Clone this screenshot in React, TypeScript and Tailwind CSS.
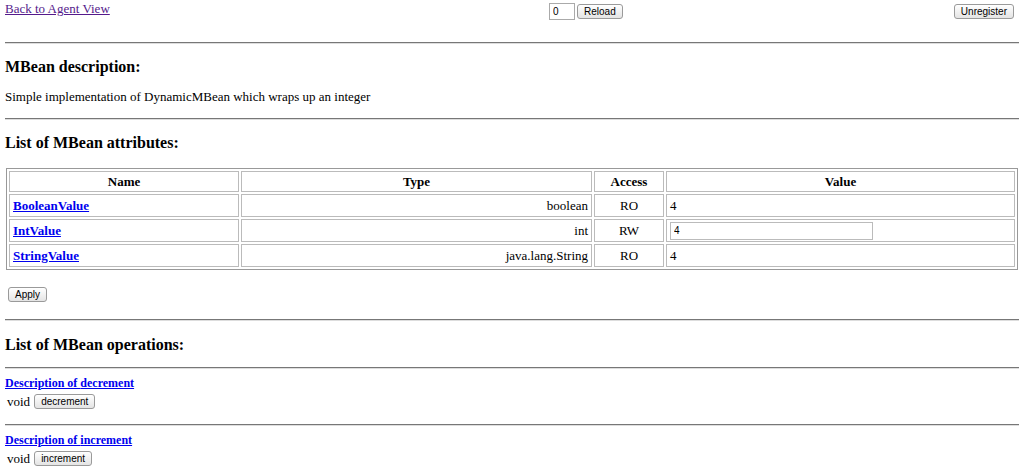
const btn =
  "h-[15px] px-[6px] rounded-[3px] border border-[#9a9a9a] bg-gradient-to-b from-white to-[#e4e4e4] text-[10px] leading-[13px] text-black font-[Liberation_Sans,Arial,sans-serif]";

function Hr({ top }: { top: string }) {
  return <div className={`mx-[5px] ${top} h-[2px] border-t border-[#777] border-b border-b-[#ddd]`} />;
}

const rows = [
  { name: "BooleanValue", type: "boolean", access: "RO", value: "4", edit: false },
  { name: "IntValue", type: "int", access: "RW", value: "4", edit: true },
  { name: "StringValue", type: "java.lang.String", access: "RO", value: "4", edit: false },
];

const cell = "border border-[#bbb] px-[3px] leading-[15px]";

export default function App() {
  return (
    <div className="w-[1024px] h-[474px] overflow-hidden bg-white text-black text-[13px] font-[Liberation_Serif,Times_New_Roman,serif]">
      <div className="flex items-start h-[22px] px-[5px] pt-[1px]">
        <a href="#" className="w-[470px] text-[#551a8b] underline text-[13px] leading-[16px]">Back to Agent View</a>
        <div className="flex items-center gap-[2px] mt-[2px] ml-[74px]">
          <input defaultValue="0" className="w-[26px] h-[17px] border border-[#aaa] px-[3px] text-[10px] font-[Liberation_Sans,Arial,sans-serif]" />
          <button className={btn}>Reload</button>
        </div>
        <button className={`${btn} ml-auto mt-[3px] mr-[5px]`}>Unregister</button>
      </div>
      <Hr top="mt-[20px]" />
      <h2 className="px-[5px] mt-[14px] text-[16px] font-bold leading-[18px]">MBean description:</h2>
      <p className="px-[5px] mt-[13px] leading-[15px]">Simple implementation of DynamicMBean which wraps up an integer</p>
      <Hr top="mt-[14px]" />
      <h2 className="px-[5px] mt-[14px] text-[16px] font-bold leading-[18px]">List of MBean attributes:</h2>
      <table className="mx-[6px] mt-[16px] w-[1012px] border border-[#999] border-separate border-spacing-[2px]">
        <thead>
          <tr className="h-[21px]">
            <th className={`${cell} w-[230px]`}>Name</th>
            <th className={`${cell} w-[351px]`}>Type</th>
            <th className={`${cell} w-[70px]`}>Access</th>
            <th className={cell}>Value</th>
          </tr>
        </thead>
        <tbody>
          {rows.map((r) => (
            <tr key={r.name} className="h-[23px]">
              <td className={cell}><a href="#" className="font-bold text-[#0000ee] underline">{r.name}</a></td>
              <td className={`${cell} text-right`}>{r.type}</td>
              <td className={`${cell} text-center`}>{r.access}</td>
              <td className={cell}>
                {r.edit ? (
                  <input defaultValue={r.value} className="w-[203px] h-[18px] border border-[#bbb] px-[3px] text-[10px] font-[Liberation_Sans,Arial,sans-serif]" />
                ) : r.value}
              </td>
            </tr>
          ))}
        </tbody>
      </table>
      <div className="px-[8px] mt-[14px]"><button className={btn}>Apply</button></div>
      <Hr top="mt-[15px]" />
      <h2 className="px-[5px] mt-[15px] text-[16px] font-bold leading-[18px]">List of MBean operations:</h2>
      <Hr top="mt-[13px]" />
      {["decrement", "increment"].map((op, i) => (
        <div key={op}>
          <a href="#" className="block px-[5px] mt-[7px] font-bold text-[#0000ee] underline leading-[15px] text-[12px]">Description of {op}</a>
          <div className="flex items-center gap-[4px] px-[7px] mt-[3px] leading-[15px]">
            void <button className={btn}>{op}</button>
          </div>
          {i === 0 && <Hr top="mt-[15px]" />}
        </div>
      ))}
    </div>
  );
}
